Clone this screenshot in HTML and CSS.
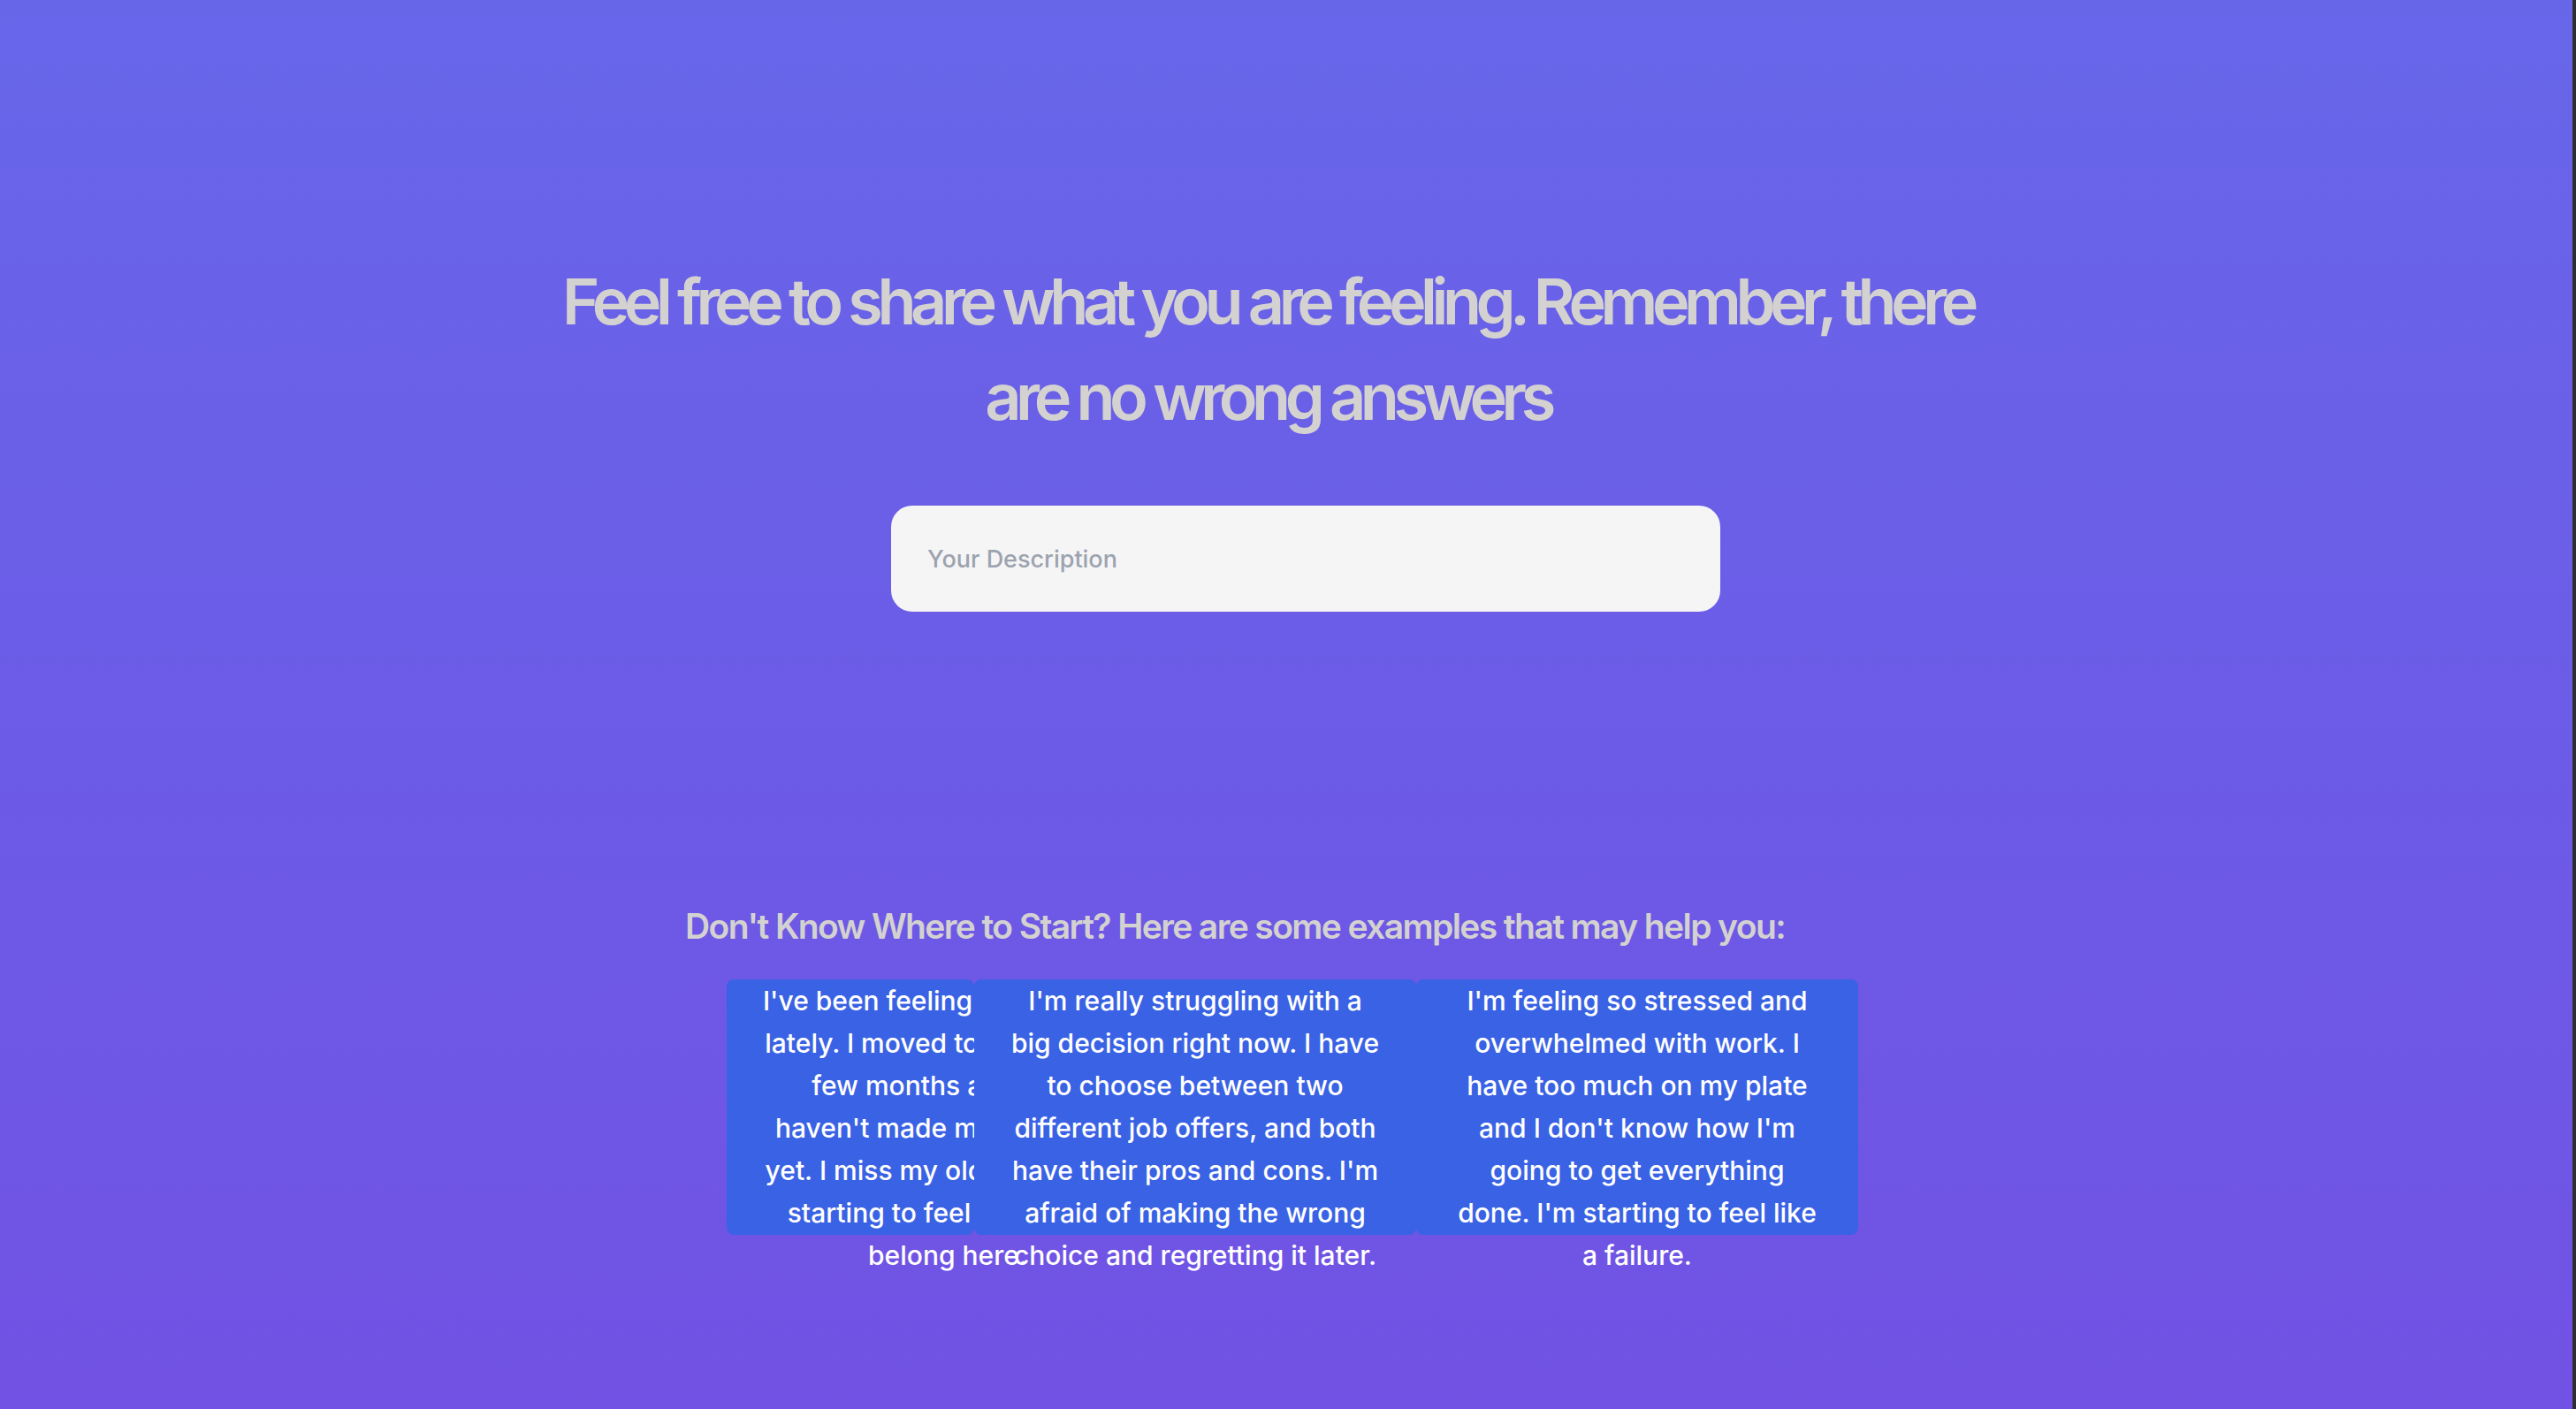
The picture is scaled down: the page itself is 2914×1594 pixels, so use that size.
FILE: index.html
```html
<!DOCTYPE html>
<html lang="en">
<head>
<meta charset="utf-8">
<title>Share your feelings</title>
<link rel="stylesheet" href="styles.css">
</head>
<body>
<main class="page">
  <h1 class="headline">Feel free to share what you are feeling. Remember, there are no wrong answers</h1>
  <div class="field">
    <input class="field-input" type="text" placeholder="Your Description">
  </div>
  <h2 class="examples-title">Don't Know Where to Start? Here are some examples that may help you:</h2>
  <div class="examples">
    <div class="card card--squeezed">
      <p class="card-text">I've been feeling really lonely lately. I moved to a new town few months ago and I haven't made many friends yet. I miss my old life and I'm starting to feel like I don't belong here.</p>
    </div>
    <div class="card">
      <p class="card-text">I'm really struggling with a big decision right now. I have to choose between two different job offers, and both have their pros and cons. I'm afraid of making the wrong choice and regretting it later.</p>
    </div>
    <div class="card">
      <p class="card-text">I'm feeling so stressed and overwhelmed with work. I have too much on my plate and I don't know how I'm going to get everything done. I'm starting to feel like a failure.</p>
    </div>
  </div>
</main>
</body>
</html>
```

FILE: styles.css
```css
* {
  box-sizing: border-box;
}

html,
body {
  margin: 0;
  padding: 0;
  height: 100%;
}

body {
  font-family: Inter, "Noto Sans", "Liberation Sans", sans-serif;
  background: linear-gradient(180deg, #6766e9 0%, #7152e4 100%);
  overflow: hidden;
}

.page {
  height: 100%;
  border-right: 4px solid #2e2e30;
  display: flex;
  flex-direction: column;
  align-items: center;
  padding-top: 287px;
}

.headline {
  margin: 0 42px 0 0;
  width: 1650px;
  font-size: 72px;
  line-height: 108px;
  font-weight: 600;
  letter-spacing: -6.45px;
  text-align: center;
  color: #d4d2d0;
}

.field {
  margin: 69px 0 0 44px;
  width: 938px;
}

.field-input {
  display: block;
  width: 100%;
  height: 120px;
  border: none;
  outline: none;
  border-radius: 24px;
  background: #f5f5f5;
  padding: 0 41px;
  font-family: inherit;
  font-size: 27px;
  font-weight: 500;
  color: #374151;
}

.field-input::placeholder {
  color: #9ca3af;
}

.examples-title {
  margin: 326px 116px 0 0;
  font-size: 39px;
  line-height: 60px;
  font-weight: 600;
  letter-spacing: -1.6px;
  color: #d4d2d0;
  white-space: nowrap;
}

.examples {
  margin: 30px 0 0 14px;
  display: flex;
  width: 1280px;
}

.card {
  flex: none;
  width: 500px;
  height: 289px;
  border-radius: 8px;
  background: #3a62e4;
}

.card--squeezed {
  width: 280px;
}

.card-text {
  margin: 0;
  width: 500px;
  padding: 0 40px;
  font-size: 30px;
  line-height: 48px;
  font-weight: 500;
  text-align: center;
  color: #ffffff;
}
```
